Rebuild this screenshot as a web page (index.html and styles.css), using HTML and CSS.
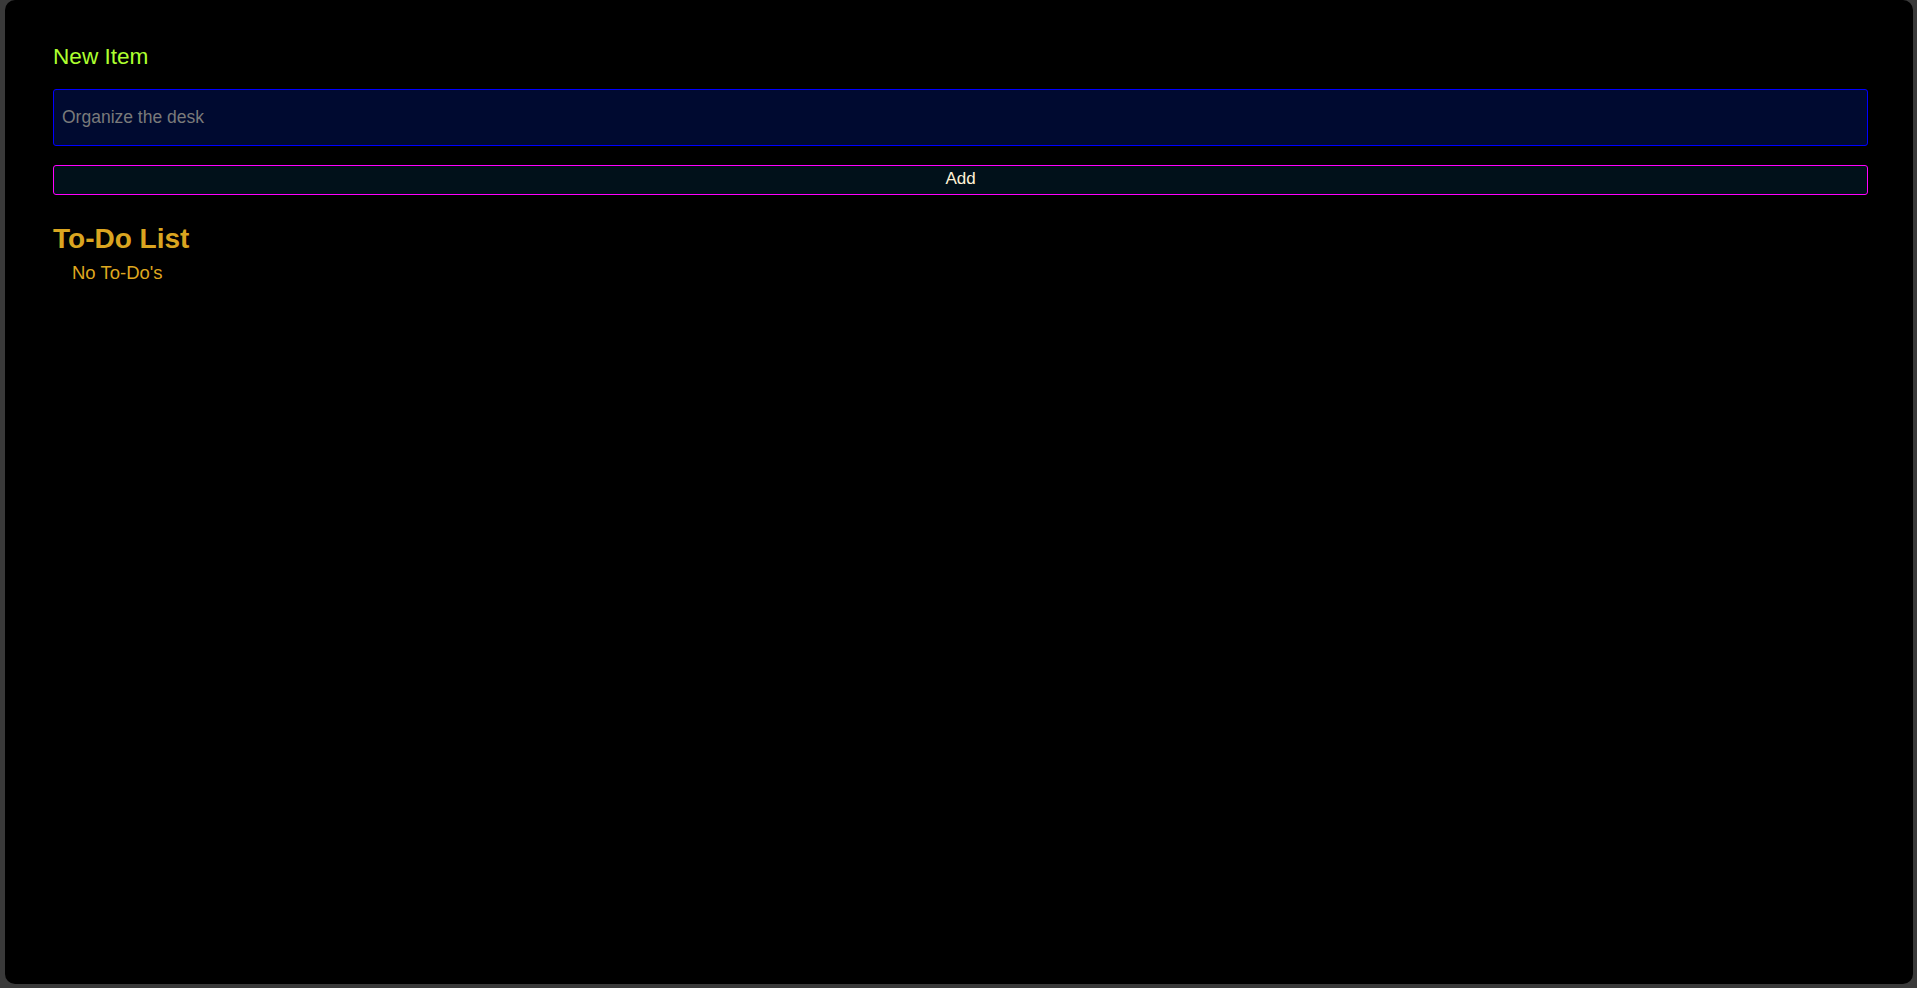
FILE: index.html
```html
<!DOCTYPE html>
<html lang="en">
<head>
<meta charset="utf-8">
<title>To-Do</title>
<link rel="stylesheet" href="styles.css">
</head>
<body>
<main class="app">
  <form class="new-item">
    <label class="new-label" for="item">New Item</label>
    <input class="item-input" id="item" type="text" placeholder="Organize the desk">
    <button class="add-btn" type="button">Add</button>
  </form>
  <section class="list">
    <h2 class="list-title">To-Do List</h2>
    <p class="empty">No To-Do's</p>
  </section>
</main>
</body>
</html>
```
FILE: styles.css
```css
* { box-sizing: border-box; }
html, body { height: 100%; }
body {
  margin: 0;
  background: #3a3a3a;
  padding: 0 4px 4px 5px;
  font-family: "Liberation Sans", Arial, sans-serif;
  overflow: hidden;
}
.app {
  height: 984px;
  background: #000;
  border-radius: 10px;
  padding: 44px 45px 0 48px;
}
.new-item {
  display: flex;
  flex-direction: column;
}
.new-label {
  color: #adff2f;
  font-size: 22.6px;
  line-height: 26px;
}
.item-input {
  margin-top: 19px;
  height: 57px;
  background: #000a30;
  border: 1px solid #0000ff;
  border-radius: 3px;
  padding: 0 8px;
  font-family: "Liberation Sans", Arial, sans-serif;
  font-size: 17.5px;
  color: #ddd;
  outline: none;
}
.item-input::placeholder { color: #7a7a7a; }
.add-btn {
  margin-top: 19px;
  height: 30px;
  background: #01111a;
  border: 1px solid #ff00ff;
  border-radius: 3px;
  color: #fff3d6;
  font-family: "Liberation Sans", Arial, sans-serif;
  font-size: 17px;
  padding: 0 0 2px;
}
.list-title {
  margin: 28px 0 0;
  color: #daa520;
  font-size: 28px;
  line-height: 32px;
  font-weight: bold;
}
.empty {
  margin: 7px 0 0;
  padding-left: 19px;
  color: #dfa71f;
  font-size: 18.5px;
  line-height: 21px;
}
```
